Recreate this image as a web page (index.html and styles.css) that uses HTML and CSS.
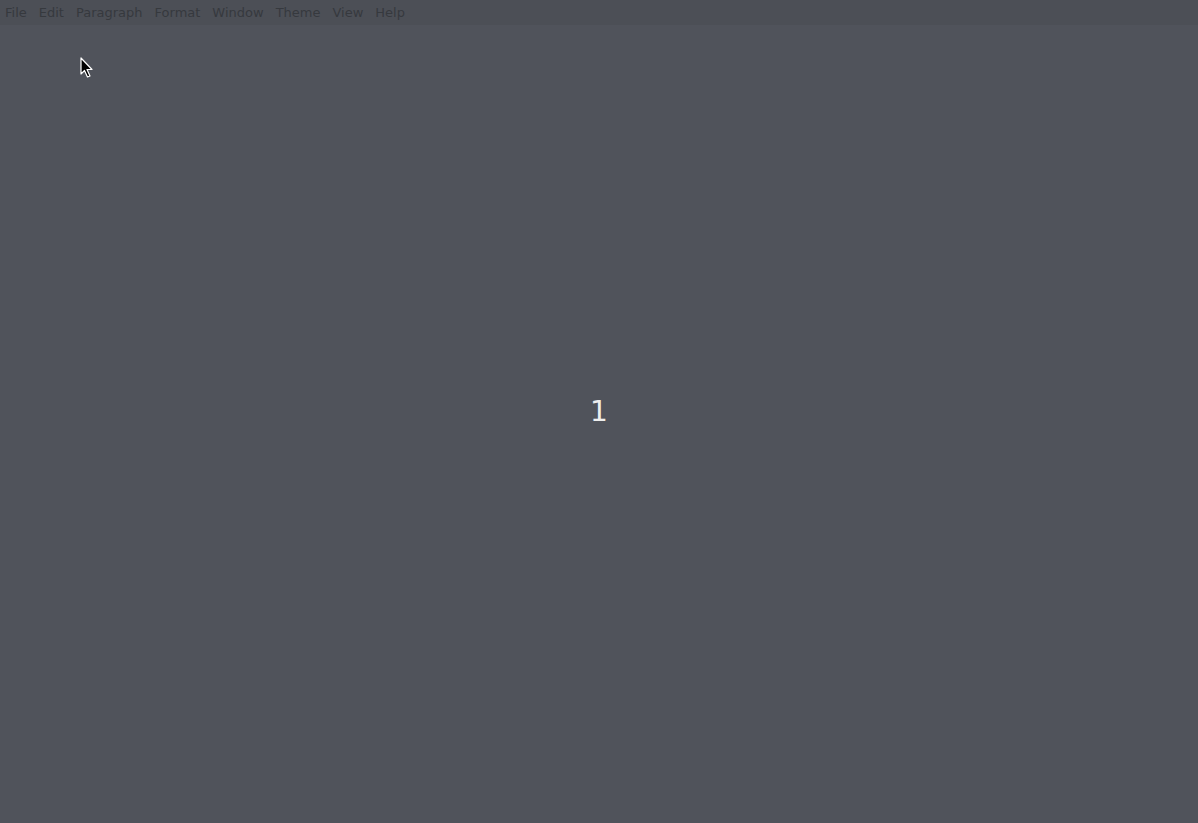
FILE: index.html
```html
<!DOCTYPE html>
<html lang="en">
<head>
    <meta charset="UTF-8">
    <title>Typora</title>
    <link rel="stylesheet" href="styles.css">
</head>
<body>
    <nav class="menubar">
        <span class="menu-item">File</span>
        <span class="menu-item">Edit</span>
        <span class="menu-item">Paragraph</span>
        <span class="menu-item">Format</span>
        <span class="menu-item">Window</span>
        <span class="menu-item">Theme</span>
        <span class="menu-item">View</span>
        <span class="menu-item">Help</span>
    </nav>
    <main class="editor">
        <div class="page-number">1</div>
    </main>
    <svg class="cursor" width="14" height="22" viewBox="0 0 14 22">
        <path d="M1 1 L1 17 L4.5 13.5 L7.5 20 L10 19 L7 12.5 L12 12.5 Z" fill="#000" stroke="#fff" stroke-width="1.2" stroke-linejoin="round"/>
    </svg>
</body>
</html>
```

FILE: styles.css
```css
* {
    box-sizing: border-box;
}

html, body {
    height: 100%;
}

body {
    margin: 0;
    display: flex;
    flex-direction: column;
    background: #50535b;
    font-family: "DejaVu Sans", "Liberation Sans", sans-serif;
    overflow: hidden;
    position: relative;
}

.menubar {
    height: 25px;
    display: flex;
    align-items: center;
    gap: 12px;
    padding-left: 5px;
    background: #4c4f56;
    font-size: 13px;
    color: #36393e;
}

.editor {
    flex: 1;
    display: flex;
    align-items: center;
    justify-content: center;
    padding-bottom: 25px;
}

.page-number {
    color: #eeeeee;
    font-size: 28px;
}

.cursor {
    position: absolute;
    left: 80px;
    top: 57px;
}
```
